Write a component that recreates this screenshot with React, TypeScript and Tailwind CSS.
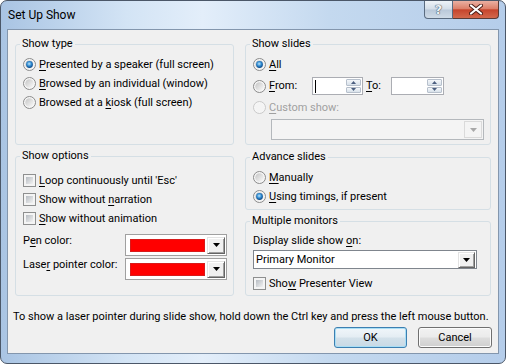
import React from "react";

// Set Up Show dialog (Windows 7 look)

const K = ({ c }: { c: string }) => (
  <span className="underline underline-offset-[2px]">{c}</span>
);

function Radio({ checked = false, disabled = false }: { checked?: boolean; disabled?: boolean }) {
  return (
    <svg width="13" height="13" viewBox="0 0 13 13" className="shrink-0">
      <defs>
        <linearGradient id="radioFill" x1="0" y1="0" x2="1" y2="1">
          <stop offset="0" stopColor="#c4c4c4" />
          <stop offset="1" stopColor="#fbfbfb" />
        </linearGradient>
        <radialGradient id="radioDot" cx="0.45" cy="0.4" r="0.6">
          <stop offset="0" stopColor="#bfe6fb" />
          <stop offset="0.55" stopColor="#2d89d0" />
          <stop offset="1" stopColor="#0c4684" />
        </radialGradient>
      </defs>
      <circle cx="6.5" cy="6.5" r="6" fill="#f6f6f6" stroke={disabled ? "#c9c9c9" : "#8a8a8a"} />
      <circle cx="6.5" cy="6.5" r="4.3" fill={disabled ? "#f4f4f4" : "url(#radioFill)"} />
      {checked && <circle cx="6.5" cy="6.5" r="3.4" fill="url(#radioDot)" />}
    </svg>
  );
}

function Check() {
  return (
    <span className="block w-[13px] h-[13px] shrink-0 border border-[#8e8f8f] bg-[#f4f4f4] p-[2px]">
      <span className="block w-full h-full bg-gradient-to-br from-[#b7bcc2] to-[#f2f2f2]" />
    </span>
  );
}

const Tri = ({ color = "#000" }: { color?: string }) => (
  <svg width="7" height="4" viewBox="0 0 7 4">
    <path d="M0 0h7L3.5 4z" fill={color} />
  </svg>
);

const SpinTri = ({ up = false }: { up?: boolean }) => (
  <svg width="5" height="3" viewBox="0 0 5 3">
    <path d={up ? "M0 3h5L2.5 0z" : "M0 0h5L2.5 3z"} fill="#4b5e7f" />
  </svg>
);

function Spin({ className, caret = false }: { className: string; caret?: boolean }) {
  return (
    <div className={`flex h-[18px] border border-[#abadb3] bg-white ${className}`}>
      <div className="flex-1 flex items-center pl-[2px]">
        {caret && <span className="block w-px h-[13px] bg-black" />}
      </div>
      <div className="flex flex-col w-[16px] py-px pr-px gap-px">
        <div className="flex-1 flex items-center justify-center border border-[#b7c0cc] rounded-[1px] bg-gradient-to-b from-[#f4f7fa] to-[#d8e1ea]">
          <SpinTri up />
        </div>
        <div className="flex-1 flex items-center justify-center border border-[#b7c0cc] rounded-[1px] bg-gradient-to-b from-[#f4f7fa] to-[#d8e1ea]">
          <SpinTri />
        </div>
      </div>
    </div>
  );
}

function Btn3d({ className }: { className: string }) {
  return (
    <div
      className={`flex items-center justify-center bg-[#f0f0f0] border border-t-[#e3e3e3] border-l-[#e3e3e3] border-r-[#646464] border-b-[#646464] shadow-[inset_1px_1px_0_#ffffff,inset_-1px_-1px_0_#a0a0a0] ${className}`}
    >
      <Tri />
    </div>
  );
}

function ColorPick() {
  return (
    <div className="w-[102px] h-[22px] border border-[#a0a0a0] bg-white flex items-center pl-[4px] pr-px">
      <div className="w-[75px] h-[13px] bg-[#ff0000] border border-[#d81b1b]" />
      <Btn3d className="ml-auto w-[18px] h-[17px]" />
    </div>
  );
}

function Group({ title, className, children }: { title: string; className: string; children: React.ReactNode }) {
  return (
    <fieldset className={`border border-[#d5dfe5] rounded-[3px] px-[4px] ${className}`}>
      <legend className="px-[2px]">{title}</legend>
      <div className="pl-[3px]">{children}</div>
    </fieldset>
  );
}

function Row({ children, className = "" }: { children: React.ReactNode; className?: string }) {
  return <div className={`flex items-center gap-[3px] h-[19px] ${className}`}>{children}</div>;
}

export default function App() {
  return (
    <div className="w-[506px] h-[364px] font-['Roboto',sans-serif] text-[11px] leading-[16px] text-black">
      <div className="w-full h-full flex flex-col rounded-[7px] border border-[#4b5768] bg-[linear-gradient(90deg,#a9c4e3_0%,#d3e4f5_25%,#e3eefa_40%,#c4d9ef_65%,#b5cdea_100%)]">
        {/* Title bar */}
        <div className="h-[28px] flex items-start justify-between">
          <div className="pl-[7px] pt-[6px] text-[12px]">Set Up Show</div>
          <div className="flex mr-[6px]">
            <div className="w-[29px] h-[18px] rounded-bl-[4px] border border-t-0 border-[#5a6b80] bg-[linear-gradient(180deg,#eef3f8_0%,#d3dde8_48%,#b9c8d9_52%,#cfdbe7_100%)] flex items-center justify-center font-['DejaVu_Sans',sans-serif] font-bold text-[13px] text-[#eef2f6] [text-shadow:0_0_1px_#2b3a4c,0_0_1px_#2b3a4c]">
              ?
            </div>
            <div className="w-[46px] h-[18px] rounded-br-[4px] border border-t-0 border-l-0 border-[#5a3b36] bg-[linear-gradient(180deg,#eab0a2_0%,#dc806a_45%,#c6452d_52%,#d3684c_100%)] flex items-center justify-center">
              <svg width="14" height="11" viewBox="0 0 14 11">
                <path d="M2 1.5l10 8M12 1.5l-10 8" stroke="#4a1d16" strokeWidth="4" strokeLinecap="round" />
                <path d="M2 1.5l10 8M12 1.5l-10 8" stroke="#ffffff" strokeWidth="2.2" strokeLinecap="round" />
              </svg>
            </div>
          </div>
        </div>

        {/* Client area */}
        <div className="mx-[6px] h-[325px] border border-[#8396ad] bg-[#f0f0f0] flex flex-col">
          <div className="grid grid-cols-[219px_246px] gap-x-[11px] pl-[7px] pt-[6px]">
            {/* Left column */}
            <div className="flex flex-col">
              <Group title="Show type" className="h-[109px]">
                <div className="pt-[3px]">
                  <Row><Radio checked /><span><K c="P" />resented by a speaker (full screen)</span></Row>
                  <Row><Radio /><span><K c="B" />rowsed by an individual (window)</span></Row>
                  <Row><Radio /><span>Browsed at a <K c="k" />iosk (full screen)</span></Row>
                </div>
              </Group>
              <Group title="Show options" className="h-[148px] mt-[3px]">
                <div className="pt-[7px]">
                  <Row><Check /><span><K c="L" />oop continuously until 'Esc'</span></Row>
                  <Row><Check /><span>Show without <K c="n" />arration</span></Row>
                  <Row><Check /><span><K c="S" />how without animation</span></Row>
                  <div className="flex items-start mt-[6px]">
                    <span className="w-[102px] leading-[14px]">P<K c="e" />n color:</span>
                    <ColorPick />
                  </div>
                  <div className="flex items-start mt-[2px]">
                    <span className="w-[102px] leading-[14px]">Lase<K c="r" /> pointer color:</span>
                    <ColorPick />
                  </div>
                </div>
              </Group>
            </div>

            {/* Right column */}
            <div className="flex flex-col">
              <Group title="Show slides" className="h-[109px]">
                <div className="pt-[3px]">
                  <Row><Radio checked /><span><K c="A" />ll</span></Row>
                  <div className="flex items-center h-[18px] mt-[3px]">
                    <Radio />
                    <span className="ml-[3px] w-[43px]"><K c="F" />rom:</span>
                    <Spin className="w-[51px]" caret />
                    <span className="ml-[3px] w-[25px]"><K c="T" />o:</span>
                    <Spin className="w-[53px]" />
                  </div>
                  <Row className="mt-[3px]"><Radio disabled /><span className="text-[#a0a0a0]"><K c="C" />ustom show:</span></Row>
                  <div className="mt-[2px] ml-[18px] w-[213px] h-[21px] border border-[#b4b8bc] bg-[#f4f4f4] flex justify-end p-px">
                    <div className="w-[18px] border border-[#dadada] bg-[#f4f4f4] flex items-center justify-center">
                      <Tri color="#a8a8a8" />
                    </div>
                  </div>
                </div>
              </Group>
              <Group title="Advance slides" className="h-[61px] mt-[4px]">
                <div className="pt-[3px]">
                  <Row><Radio /><span><K c="M" />anually</span></Row>
                  <Row><Radio checked /><span><K c="U" />sing timings, if present</span></Row>
                </div>
              </Group>
              <Group title="Multiple monitors" className="h-[83px] mt-[3px]">
                <div className="pt-[4px]">
                  <div>Display slide show <K c="o" />n:</div>
                  <div className="mt-px w-[224px] h-[19px] border border-[#7f858d] bg-white flex items-center pl-[2px] pr-px">
                    <span>Primary Monitor</span>
                    <Btn3d className="ml-auto w-[17px] h-[16px]" />
                  </div>
                  <Row className="mt-[5px]"><Check /><span>Sho<K c="w" /> Presenter View</span></Row>
                </div>
              </Group>
            </div>
          </div>

          <div className="mt-[13px] pl-[5px]">
            To show a laser pointer during slide show, hold down the Ctrl key and press the left mouse button.
          </div>
          <div className="mt-[2px] pr-[6px] flex justify-end gap-[11px]">
            <button className="w-[73px] h-[21px] rounded-[3px] border border-[#3c7fb1] bg-[linear-gradient(180deg,#f0f6fa_0%,#e4edf3_48%,#d3e1ea_52%,#c8d9e5_100%)] shadow-[inset_0_0_0_1px_#a9def5]">
              OK
            </button>
            <button className="w-[74px] h-[21px] rounded-[3px] border border-[#707070] bg-[linear-gradient(180deg,#f2f2f2_0%,#ebebeb_48%,#dddddd_52%,#cfcfcf_100%)] shadow-[inset_0_0_0_1px_#fcfcfc]">
              Cancel
            </button>
          </div>
        </div>
      </div>
    </div>
  );
}
